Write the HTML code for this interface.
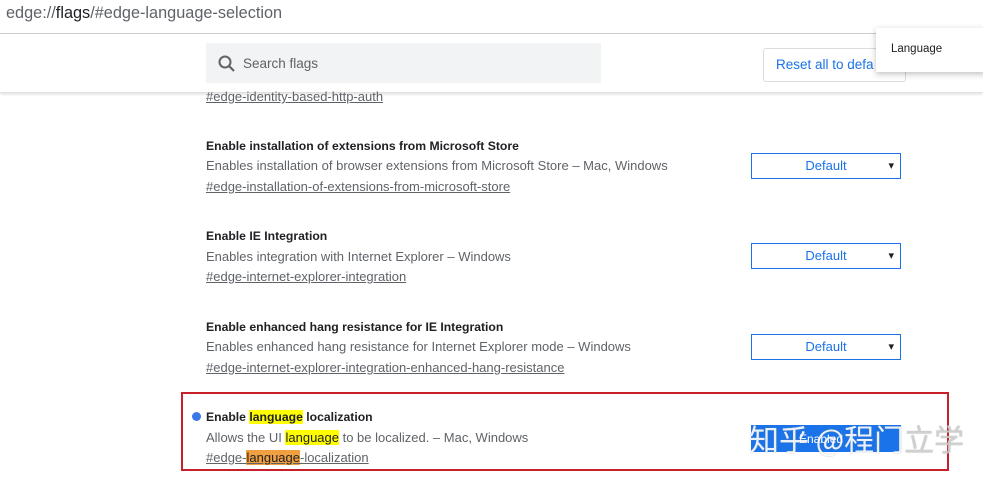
<!DOCTYPE html>
<html><head><meta charset="utf-8"><style>
*{margin:0;padding:0;box-sizing:border-box}
body{width:983px;height:478px;overflow:hidden;background:#fff;font-family:"Liberation Sans",sans-serif;position:relative;color:#202124}
.a{position:absolute;white-space:nowrap}
.t{font-size:12.2px;font-weight:bold;color:#202124}
.d{font-size:13px;color:#5f6368}
.l{font-size:13px;color:#5f6368;text-decoration:underline}
.sel{position:absolute;left:751px;width:150px;height:26px;border:1px solid #1a73e8;font-size:13px;color:#1a73e8;text-align:center;line-height:24px}
.sel:after{content:"▾";position:absolute;right:6px;top:0;font-size:11px;color:#202124}
.hy{background:#ffff00;color:#202124}
.ho{background:#f0a040;color:#202124}
</style></head><body>
<div class="a" style="left:6px;top:4px;font-size:16.3px;color:#5f6368">edge://<span style="color:#202124">flags</span>/#edge-language-selection</div>
<div class="a" style="left:0;top:33px;width:983px;height:1px;background:#d0d0d0"></div>
<div class="a" style="left:0;top:34px;width:983px;height:58px;background:#fff;box-shadow:0 2px 3px rgba(0,0,0,.15)"></div>
<div class="a" style="left:206px;top:43px;width:395px;height:40px;background:#f1f3f4;border-radius:2px"></div>
<svg class="a" style="left:217px;top:54px" width="20" height="20" viewBox="0 0 20 20"><circle cx="8" cy="8" r="5.5" fill="none" stroke="#5f6368" stroke-width="2"/><line x1="12" y1="12" x2="17" y2="17" stroke="#5f6368" stroke-width="2.2"/></svg>
<div class="a" style="left:243px;top:56px;font-size:13.5px;color:#5f6368">Search flags</div>
<div class="a" style="left:763px;top:48px;width:143px;height:34px;border:1px solid #dadce0;border-radius:3px;font-size:13.5px;color:#1a73e8;padding:8px 0 0 12px">Reset all to defa</div>
<div class="a" style="left:876px;top:28px;width:110px;height:44px;background:#fff;box-shadow:0 2px 6px rgba(0,0,0,.25);font-size:11.5px;color:#202124;padding:15px 0 0 15px">Language</div>
<div class="a l" style="left:206px;top:89px">#edge-identity-based-http-auth</div>

<div class="a t" style="left:206px;top:139px">Enable installation of extensions from Microsoft Store</div>
<div class="a d" style="left:206px;top:158px">Enables installation of browser extensions from Microsoft Store – Mac, Windows</div>
<div class="a l" style="left:206px;top:179px">#edge-installation-of-extensions-from-microsoft-store</div>
<div class="sel" style="top:153px">Default</div>

<div class="a t" style="left:206px;top:229px">Enable IE Integration</div>
<div class="a d" style="left:206px;top:249px">Enables integration with Internet Explorer – Windows</div>
<div class="a l" style="left:206px;top:269px">#edge-internet-explorer-integration</div>
<div class="sel" style="top:243px">Default</div>

<div class="a t" style="left:206px;top:320px">Enable enhanced hang resistance for IE Integration</div>
<div class="a d" style="left:206px;top:339px">Enables enhanced hang resistance for Internet Explorer mode – Windows</div>
<div class="a l" style="left:206px;top:360px">#edge-internet-explorer-integration-enhanced-hang-resistance</div>
<div class="sel" style="top:334px">Default</div>

<div class="a" style="left:181px;top:392px;width:768px;height:79px;border:2px solid #c8202a"></div>
<div class="a" style="left:192px;top:412px;width:9px;height:9px;border-radius:50%;background:#3b78e7"></div>
<div class="a t" style="left:206px;top:410px">Enable <span class="hy">language</span> localization</div>
<div class="a d" style="left:206px;top:430px">Allows the UI <span class="hy">language</span> to be localized. – Mac, Windows</div>
<div class="a l" style="left:206px;top:450px">#edge-<span class="ho">language</span>-localization</div>
<div class="a" style="left:751px;top:425px;width:150px;height:27px;background:#1a73e8;color:#fff;font-size:12px;padding:7px 0 0 48px">Enabled</div>
<div class="a" style="left:749px;top:416px;font-size:30px;color:#fff;font-family:'Noto Sans CJK SC',sans-serif;opacity:.9;text-shadow:0 0 1px #888">知乎 @程门<span style="color:#ccc">立学</span></div>
</body></html>
